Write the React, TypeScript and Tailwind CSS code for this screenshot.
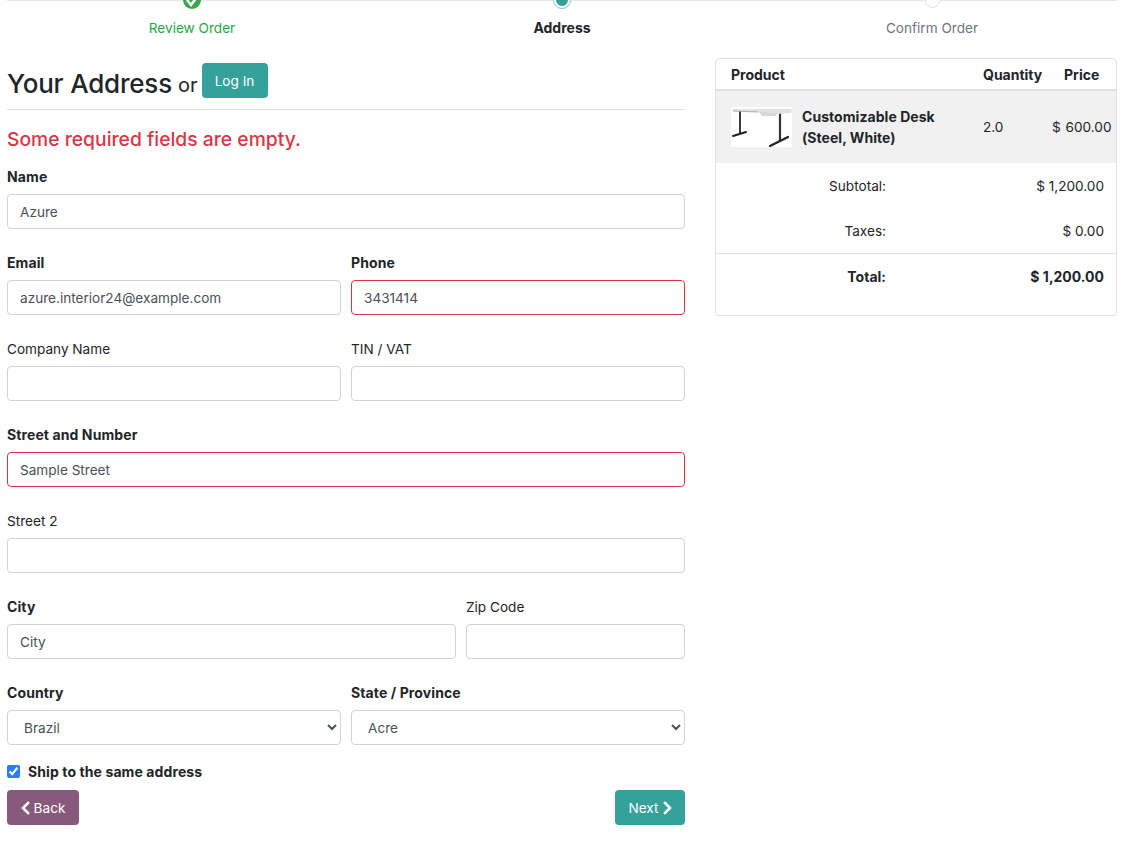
const inputClass = "block w-full h-[35px] px-[12px] rounded-[4px] border border-[#ced4da] bg-white text-[13.6px] text-[#495057] outline-none";
const selectClass = "block w-full h-[35px] px-[12px] rounded-[4px] border border-[#ced4da] bg-white text-[13.6px] text-[#495057] outline-none";

function Field({ label, value = "", bold, error, className = "" }: { label: string; value?: string; bold?: boolean; error?: boolean; className?: string }) {
  return (
    <div className={className}>
      <label className={`block h-[17px] leading-[17px] mb-[9px] text-[#212529] ${bold ? "font-bold text-[14px] tracking-[0.1px]" : "pt-[1px] text-[13.6px]"}`}>{label}</label>
      <input readOnly value={value} className={`${inputClass} ${error ? "border-[#dc3545]" : ""}`} />
    </div>
  );
}

function SelectField({ label, value }: { label: string; value: string }) {
  return (
    <div>
      <label className="block h-[17px] leading-[17px] mb-[9px] text-[14px] font-bold tracking-[0.1px] text-[#212529]">{label}</label>
      <select defaultValue={value} className={selectClass}>
        <option>{value}</option>
      </select>
    </div>
  );
}

function DeskImage() {
  return (
    <svg width="61" height="40" viewBox="0 0 61 40" className="shrink-0 bg-white">
      <path d="M9 4 V27" stroke="#3a3a3a" strokeWidth="2" />
      <path d="M2 29 L15 25" stroke="#222" strokeWidth="2" strokeLinecap="round" />
      <path d="M49 6 V34" stroke="#333" strokeWidth="2.2" />
      <path d="M39 39 L57 30" stroke="#222" strokeWidth="2.2" strokeLinecap="round" />
      <path d="M1 2 L61 2 L60 6 L46 7 L32 7 L27 5 L2 4 Z" fill="#e2e2e2" />
      <path d="M2 4 L27 5" stroke="#9a9a9a" strokeWidth="0.8" />
      <path d="M28 5 L46 6 L45 9 L31 9 Z" fill="#d6d6d6" />
    </svg>
  );
}

function Chevron({ left }: { left?: boolean }) {
  return (
    <svg width="9" height="14" viewBox="0 0 9 14" fill="none" stroke="white" strokeWidth="2.6" strokeLinecap="square">
      <path d={left ? "M7 2 L2 7 L7 12" : "M2 2 L7 7 L2 12"} />
    </svg>
  );
}

export default function App() {
  return (
    <div className="h-[841px] overflow-hidden bg-white pl-[7px] pr-[18px] text-[13.6px] text-[#212529] font-['Inter',sans-serif]">
      {/* steps */}
      <div className="relative grid grid-cols-3 h-[58px] border-t border-[#e4e9ee]">
        <svg width="18" height="18" viewBox="0 0 18 18" className="absolute left-[176px] top-[-10px]">
          <circle cx="9" cy="9" r="9" fill="#36a84a" />
          <path d="M4 9 L8 14 L14 6" fill="none" stroke="white" strokeWidth="2.6" />
        </svg>
        <div className="absolute left-[546px] top-[-10px] w-[18px] h-[18px] rounded-full bg-white border border-[#7fcac6] flex items-center justify-center">
          <div className="w-[12px] h-[12px] rounded-full bg-[#36a09b]" />
        </div>
        <div className="absolute left-[918px] top-[-8px] w-[15px] h-[15px] rounded-full bg-white border border-[#dee2e6]" />
        <div className="text-center pt-[19px] leading-[17px] text-[#28a745]">Review Order</div>
        <div className="text-center pt-[18px] leading-[17px] text-[14px] font-bold">Address</div>
        <div className="text-center pt-[19px] leading-[17px] text-[#6c757d]">Confirm Order</div>
      </div>

      <div className="flex gap-[30px] items-start">
        {/* address form */}
        <div className="w-[678px] shrink-0">
          <div className="flex items-center h-[52px] border-b border-[#dee2e6]">
            <h2 className="text-[26px] leading-[34px] font-medium tracking-[-0.2px]">Your Address</h2>
            <span className="ml-[6px] text-[20px] mt-[3px]">or</span>
            <button className="ml-[4px] mb-[6px] pt-[1px] h-[35px] w-[66px] rounded-[4px] bg-[#36a09b] text-white text-[13.6px]">Log In</button>
          </div>
          <div className="mt-[17px] mb-[17px] h-[24px] leading-[24px] text-[19.3px] text-[#dc3545] font-medium">Some required fields are empty.</div>

          <div className="flex flex-col gap-[25px]">
            <Field label="Name" value="Azure" bold />
            <div className="grid grid-cols-2 gap-[10px]">
              <Field label="Email" value="azure.interior24@example.com" bold />
              <Field label="Phone" value="3431414" bold error />
            </div>
            <div className="grid grid-cols-2 gap-[10px]">
              <Field label="Company Name" />
              <Field label="TIN / VAT" />
            </div>
            <Field label="Street and Number" value="Sample Street" bold error />
            <Field label="Street 2" />
            <div className="grid grid-cols-[449px_219px] gap-[10px]">
              <Field label="City" value="City" bold />
              <Field label="Zip Code" />
            </div>
            <div className="grid grid-cols-2 gap-[10px]">
              <SelectField label="Country" value="Brazil" />
              <SelectField label="State / Province" value="Acre" />
            </div>
          </div>

          <label className="mt-[18px] flex items-center h-[17px] gap-[8px] text-[14px] font-bold tracking-[0.1px]">
            <input type="checkbox" defaultChecked className="w-[13px] h-[13px] m-0 accent-[#2b7cff]" />
            Ship to the same address
          </label>

          <div className="mt-[10px] flex justify-between">
            <button className="h-[35px] w-[72px] pt-[1px] rounded-[4px] bg-[#875a7b] text-white flex items-center justify-center gap-[4px]"><Chevron left />Back</button>
            <button className="h-[35px] w-[70px] pt-[1px] rounded-[4px] bg-[#36a09b] text-white flex items-center justify-center gap-[4px]">Next<Chevron /></button>
          </div>
        </div>

        {/* order summary */}
        <div className="w-[402px] h-[258px] shrink-0 rounded-[4px] border border-[#dee2e6]">
          <div className="flex items-center h-[32px] pt-[1px] border-b-2 border-[#dee2e6] text-[14px] font-bold">
            <div className="pl-[15px] w-[267px]">Product</div>
            <div className="w-[81px]">Quantity</div>
            <div>Price</div>
          </div>
          <div className="flex items-center h-[72px] bg-[#f1f1f2]">
            <div className="pl-[15px] flex items-center gap-[10px] w-[267px]">
              <DeskImage />
              <div className="text-[14px] font-bold leading-[21px] tracking-[0.05px]">Customizable Desk<br />(Steel, White)</div>
            </div>
            <div className="w-[69px] pt-[1px]">2.0</div>
            <div className="pt-[1px] [word-spacing:1px]">$ 600.00</div>
          </div>
          <div className="flex h-[46px] items-center pr-[12px]">
            <div className="w-[170px] text-right">Subtotal:</div>
            <div className="flex-1 text-right">$ 1,200.00</div>
          </div>
          <div className="flex h-[45px] items-center pr-[12px] border-b border-[#dee2e6]">
            <div className="w-[170px] text-right">Taxes:</div>
            <div className="flex-1 text-right">$ 0.00</div>
          </div>
          <div className="flex h-[45px] items-center pr-[12px] text-[14px] font-bold">
            <div className="w-[170px] text-right">Total:</div>
            <div className="flex-1 text-right">$ 1,200.00</div>
          </div>
        </div>
      </div>
    </div>
  );
}
